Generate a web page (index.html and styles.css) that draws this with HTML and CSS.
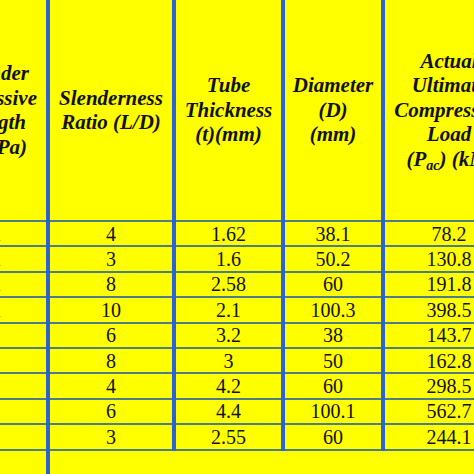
FILE: index.html
```html
<!DOCTYPE html>
<html>
<head>
<meta charset="utf-8">
<link rel="stylesheet" href="styles.css">
</head>
<body>
<div class="frame">
<table class="data">
  <colgroup>
    <col class="c0"><col class="c1"><col class="c2"><col class="c3"><col class="c4">
  </colgroup>
  <thead>
    <tr class="head">
      <th class="first">
        <span class="ln l1">Cylinder</span>
        <span class="ln l2">Compressive</span>
        <span class="ln l3">Strength</span>
        <span class="ln l4">(MPa)</span>
      </th>
      <th>Slenderness<br>Ratio (L/D)</th>
      <th>Tube<br>Thickness<br>(t)(mm)</th>
      <th>Diameter<br>(D)<br>(mm)</th>
      <th>Actual<br>Ultimate<br>Compressive<br>Load<br>(P<sub>ac</sub>) (kN)</th>
    </tr>
  </thead>
  <tbody>
    <tr><td class="first">32.41</td><td>4</td><td>1.62</td><td>38.1</td><td>78.2</td></tr>
    <tr><td class="first">32.41</td><td>3</td><td>1.6</td><td>50.2</td><td>130.8</td></tr>
    <tr><td class="first">32.41</td><td>8</td><td>2.58</td><td>60</td><td>191.8</td></tr>
    <tr><td class="first">32.41</td><td>10</td><td>2.1</td><td>100.3</td><td>398.5</td></tr>
    <tr><td class="first">45</td><td>6</td><td>3.2</td><td>38</td><td>143.7</td></tr>
    <tr><td class="first">45</td><td>8</td><td>3</td><td>50</td><td>162.8</td></tr>
    <tr><td class="first">45</td><td>4</td><td>4.2</td><td>60</td><td>298.5</td></tr>
    <tr><td class="first">45</td><td>6</td><td>4.4</td><td>100.1</td><td>562.7</td></tr>
    <tr><td class="first">45</td><td>3</td><td>2.55</td><td>60</td><td>244.1</td></tr>
    <tr class="tail"><td></td><td colspan="4"></td></tr>
  </tbody>
</table>
</div>
</body>
</html>
```
FILE: styles.css
```css
html, body {
  margin: 0;
  padding: 0;
  background: #ffff00;
}
.frame {
  width: 474px;
  height: 474px;
  overflow: hidden;
  background: #ffff00;
}
.data {
  border-collapse: collapse;
  table-layout: fixed;
  width: 595px;
  margin-left: -82px;
  font-family: "Liberation Serif", "Times New Roman", serif;
  color: #111;
}
.c0 { width: 130px; }
.c1 { width: 126px; }
.c2 { width: 109px; }
.c3 { width: 100px; }
.c4 { width: 130px; }
.data th, .data td {
  padding: 0;
  text-align: center;
  vertical-align: middle;
  border-left: 4px solid #2b62d6;
  border-right: 4px solid #2b62d6;
  border-bottom: 2px solid #4f7d86;
}
.data th:first-child, .data td:first-child { border-left: none; }
.data th:last-child, .data td:last-child { border-right: none; }
.head th {
  height: 220px;
  font-weight: bold;
  font-style: italic;
  font-size: 21px;
  line-height: 24.5px;
}
.head th.first {
  text-align: right;
}
.ln { display: block; }
.l1 { margin-right: 17px; }
.l2 { margin-right: 9px; }
.l3 { margin-right: 20px; }
.l4 { margin-right: 19px; }
.head sub {
  font-size: 14px;
  vertical-align: -4px;
  line-height: 0;
}
.data tbody td {
  height: 23.4px;
  font-size: 20px;
  line-height: 20px;
}
.data tbody td.first {
  padding-right: 6px;
}
.data tbody tr.tail td {
  height: 40px;
  border-bottom: none;
}
.data tbody tr.tail td + td { border-right: none; }
```
